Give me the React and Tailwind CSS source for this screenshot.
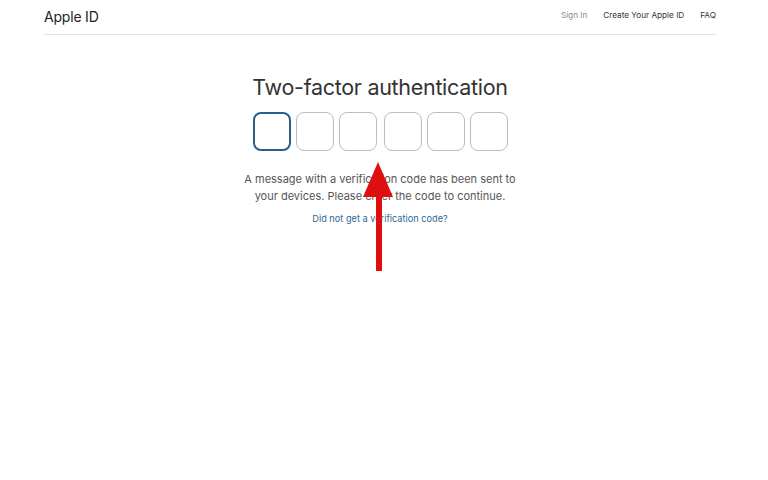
export default function App() {
  const boxes = [0, 1, 2, 3, 4, 5];
  return (
    <div className="relative w-[768px] h-[480px] bg-white font-['Inter','Noto_Sans',sans-serif] overflow-hidden">
      {/* Header */}
      <header className="ml-[44px] mr-[52px] h-[35px] flex items-center justify-between border-b border-[#e3e3e3]">
        <span className="text-[14px] text-[#1d1d1f] tracking-[-0.2px] -mt-[2px]">Apple ID</span>
        <nav className="flex items-center gap-[16px] text-[8.2px] -mt-[3px]">
          <span className="text-[#8a8a8a]">Sign In</span>
          <span className="text-[#333]">Create Your Apple ID</span>
          <span className="text-[#333]">FAQ</span>
        </nav>
      </header>

      {/* Main */}
      <main className="ml-[44px] mr-[52px] flex flex-col items-center pt-[39px]">
        <h1 className="text-[21.5px] leading-[26px] text-[#333] tracking-[-0.3px]">Two-factor authentication</h1>
        <div className="flex mt-[12px]">
          {boxes.map((i) => (
            <div
              key={i}
              className={
                (i === 0
                  ? 'border-2 border-[#2b5f8a] '
                  : 'border border-[#bdbdbd] ') +
                'w-[38px] h-[39px] rounded-[8px] ' +
                (i === 3 ? 'ml-[7px]' : i === 0 ? '' : 'ml-[5px]')
              }
            />
          ))}
        </div>
        <p className="mt-[20px] text-[11px] leading-[17px] text-[#555] text-center w-[280px]">
          A message with a verification code has been sent to your devices. Please enter the code to continue.
        </p>
        <a className="mt-[7px] text-[9.2px] text-[#2f6796]">Did not get a verification code?</a>
      </main>

      {/* Annotation arrow */}
      <svg className="absolute left-[360px] top-[160px]" width="40" height="114" viewBox="0 0 40 114">
        <polygon points="18,2 3,37 33,37" fill="#e00f0f" />
        <rect x="16" y="30" width="6" height="81" fill="#e00f0f" />
      </svg>
    </div>
  );
}
